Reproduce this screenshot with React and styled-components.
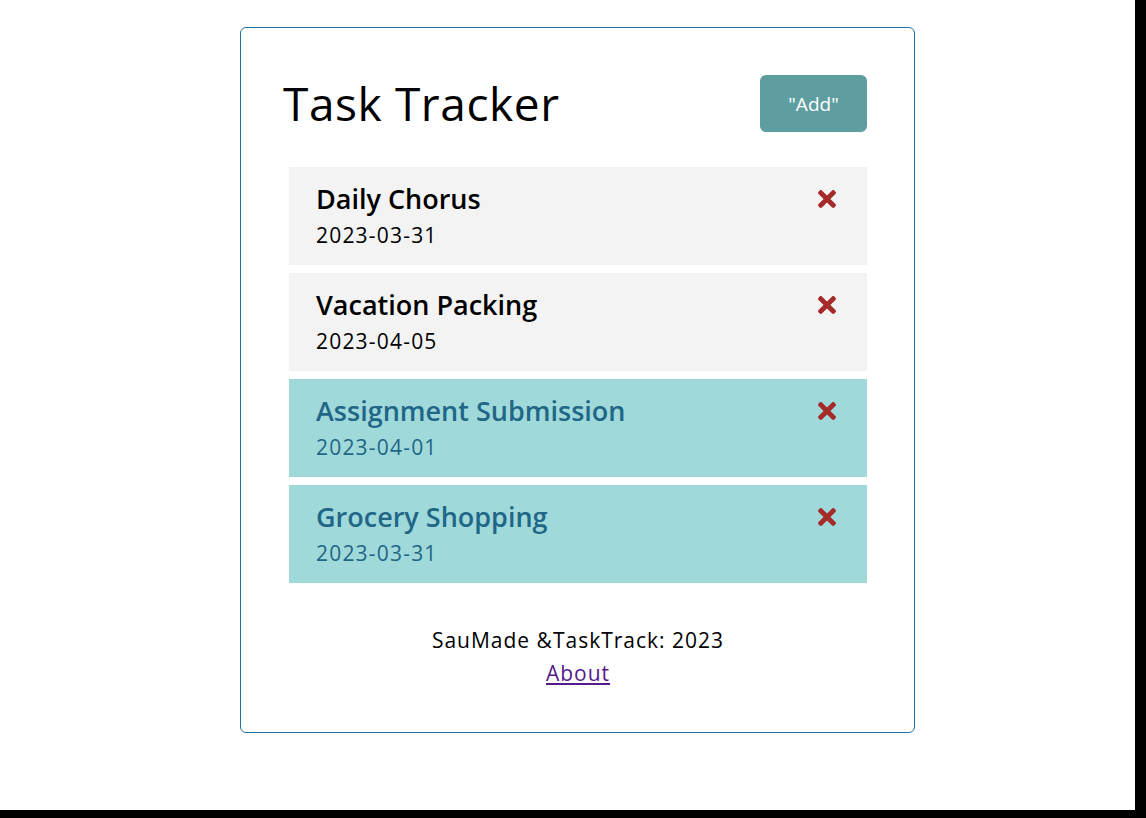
import React from "react";
import styled, { createGlobalStyle } from "styled-components";
import { FaTimes } from "react-icons/fa";

const Global = createGlobalStyle`
  html, body { margin: 0; padding: 0; background: #000; }
  body { font-family: "Open Sans", "Noto Sans", sans-serif; }
  * { box-sizing: border-box; }
`;

const Page = styled.div`
  width: 1135px;
  height: 810px;
  background: #fff;
  padding-top: 27px;
  overflow: hidden;
`;

const Container = styled.div`
  width: 675px;
  height: 706px;
  margin-left: 240px;
  border: 1px solid #23729c;
  border-radius: 6px;
  padding: 47px 47px 0 48px;
  display: flex;
  flex-direction: column;
`;

const Header = styled.header`
  display: flex;
  align-items: center;
  justify-content: space-between;
  height: 57px;
  margin-left: -6px;
`;

const Title = styled.h1`
  margin: 0;
  font-size: 46px;
  font-weight: 400;
  color: #000;
  letter-spacing: 0.6px;
  line-height: 57px;
`;

const AddButton = styled.button`
  width: 107px;
  height: 57px;
  background: #5f9ea0;
  color: #fff;
  border: none;
  border-radius: 6px;
  font-family: inherit;
  font-size: 19px;
  cursor: pointer;
`;

const TaskList = styled.div`
  margin-top: 35px;
  display: flex;
  flex-direction: column;
  gap: 8px;
`;

const Task = styled.div`
  height: 98px;
  padding: 13px 27px 13px 27px;
  background: ${(p) => (p.$reminder ? "#a0d9da" : "#f3f3f3")};
  color: ${(p) => (p.$reminder ? "#1f6687" : "#000")};
`;

const TaskTitle = styled.h3`
  margin: 0;
  display: flex;
  align-items: center;
  justify-content: space-between;
  font-size: 27px;
  font-weight: 600;
  line-height: 38px;
`;

const TaskDate = styled.p`
  margin: 0;
  font-size: 21px;
  letter-spacing: 1.2px;
  line-height: 34px;
`;

const RemoveIcon = styled(FaTimes)`
  color: #a52a2a;
  font-size: 26px;
  flex: none;
`;

const Footer = styled.footer`
  margin-top: 41px;
  text-align: center;
  font-size: 21px;
  line-height: 33px;
  letter-spacing: 1px;
  color: #000;
`;

const FooterText = styled.p`
  margin: 0;
`;

const AboutLink = styled.a`
  color: #551a8b;
  text-decoration: underline;
`;

const tasks = [
  { id: 1, text: "Daily Chorus", day: "2023-03-31", reminder: false },
  { id: 2, text: "Vacation Packing", day: "2023-04-05", reminder: false },
  { id: 3, text: "Assignment Submission", day: "2023-04-01", reminder: true },
  { id: 4, text: "Grocery Shopping", day: "2023-03-31", reminder: true },
];

export default function App() {
  return (
    <>
      <Global />
      <Page>
        <Container>
          <Header>
            <Title>Task Tracker</Title>
            <AddButton>"Add"</AddButton>
          </Header>
          <TaskList>
            {tasks.map((t) => (
              <Task key={t.id} $reminder={t.reminder}>
                <TaskTitle>
                  {t.text}
                  <RemoveIcon />
                </TaskTitle>
                <TaskDate>{t.day}</TaskDate>
              </Task>
            ))}
          </TaskList>
          <Footer>
            <FooterText>SauMade &amp;TaskTrack: 2023</FooterText>
            <AboutLink href="#about">About</AboutLink>
          </Footer>
        </Container>
      </Page>
    </>
  );
}
